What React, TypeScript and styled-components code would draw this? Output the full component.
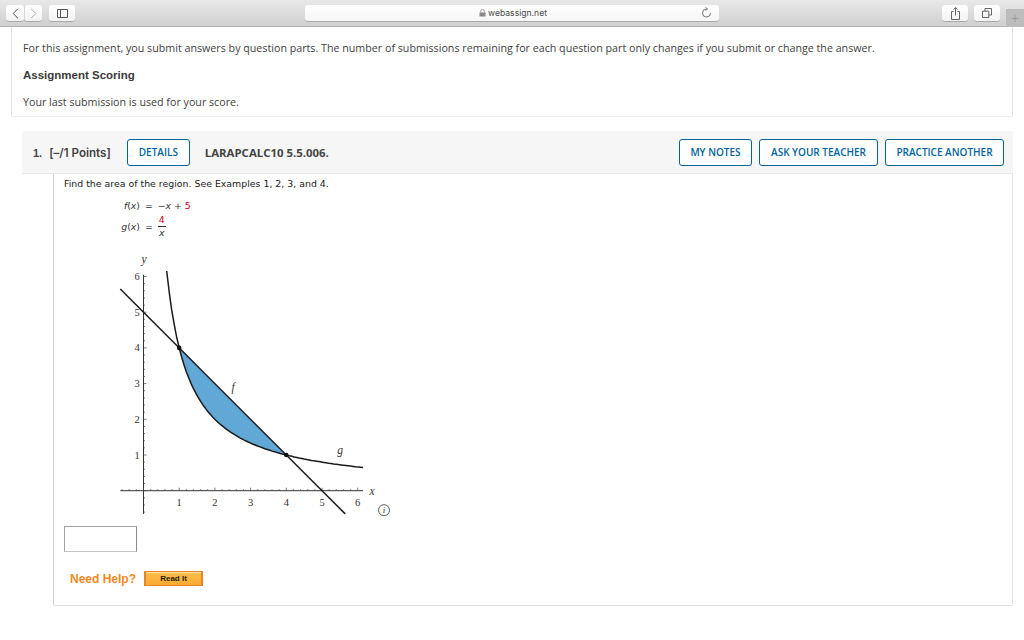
import React from "react";
import styled, { createGlobalStyle } from "styled-components";

const GlobalStyle = createGlobalStyle`
  html, body {
    margin: 0;
    padding: 0;
    background: #fff;
    overflow: hidden;
  }
`;

const Page = styled.div`
  width: 1024px;
  height: 640px;
  display: flex;
  flex-direction: column;
  overflow: hidden;
  font-family: "Open Sans", sans-serif;
  color: #3a3a3a;
`;

const Toolbar = styled.header`
  position: relative;
  z-index: 1;
  flex: 0 0 27px;
  box-sizing: border-box;
  height: 27px;
  padding: 5px 0 0 6px;
  display: flex;
  align-items: flex-start;
  background: linear-gradient(#e8e8e8, #d0d0d0);
  border-bottom: 1px solid #b4b4b4;
`;

const ToolButton = styled.div<{ $w: number }>`
  box-sizing: border-box;
  width: ${(p) => p.$w}px;
  height: 16px;
  display: flex;
  align-items: center;
  justify-content: center;
  background: linear-gradient(#fff, #f3f3f3);
  border-radius: 3px;
  box-shadow: 0 1px 0 #a9a9a9;
  color: #555;
`;

const BackForward = styled.div`
  display: flex;
  margin-right: 7px;

  & > div + div {
    border-left: 1px solid #d8d8d8;
  }
`;

const AddressBar = styled.div`
  box-sizing: border-box;
  width: 414px;
  height: 16px;
  margin-left: 230px;
  padding: 0 7px 0 0;
  display: flex;
  align-items: center;
  background: linear-gradient(#fff, #f6f6f6);
  border-radius: 3px;
  box-shadow: 0 1px 0 #a9a9a9;
`;

const Url = styled.div`
  flex: 1;
  display: flex;
  align-items: center;
  justify-content: center;
  gap: 2px;
  padding-left: 20px;
  font-family: "Inter", sans-serif;
  font-size: 8.6px;
  color: #4a4a4a;
`;

const RightTools = styled.div`
  margin-left: auto;
  display: flex;
  gap: 6px;
  margin-right: 24px;
`;

const NewTab = styled.div`
  position: absolute;
  right: 0;
  top: 9px;
  width: 18px;
  height: 18px;
  display: flex;
  align-items: center;
  justify-content: center;
  background: #bcbcbc;
  color: #8c8c8c;
  font-size: 15px;
  font-weight: 300;
`;

const Viewport = styled.main`
  flex: 1;
  min-height: 0;
  overflow: hidden;
`;

const Instructions = styled.section`
  box-sizing: border-box;
  height: 103px;
  margin: -13px 11px 0 11px;
  padding: 0 0 0 11px;
  border-left: 1px solid #e3e3e3;
  border-right: 1px solid #e3e3e3;
  border-bottom: 1px solid #eeeeee;
`;

const SectionHeading = styled.h3<{ $mt: number }>`
  margin: ${(p) => p.$mt}px 0 0;
  font-family: "Liberation Sans", sans-serif;
  font-size: 11.5px;
  line-height: 14px;
  font-weight: 700;
  color: #3a3a3a;
`;

const Body = styled.p<{ $mt: number }>`
  margin: ${(p) => p.$mt}px 0 0;
  font-size: 10.7px;
  line-height: 14px;
  color: #3f3f3f;
  white-space: nowrap;
`;

const Question = styled.article`
  margin: 14px 11px 0 22px;
`;

const QuestionHeader = styled.div`
  box-sizing: border-box;
  height: 43px;
  padding: 0 9px 0 11px;
  display: flex;
  align-items: center;
  background: #f6f6f6;
  border-bottom: 1px solid #e6e6e6;
  border-radius: 2px 2px 0 0;
`;

const Number = styled.span`
  padding-top: 1px;
  font-family: "Liberation Sans", sans-serif;
  font-size: 11px;
  font-weight: 700;
  color: #444;
  margin-right: 7px;
`;

const Points = styled.span`
  padding-top: 1px;
  font-family: "Inter", sans-serif;
  font-size: 11.6px;
  font-weight: 600;
  color: #444;
  margin-right: 16px;
`;

const OutlineButton = styled.button<{ $w: number }>`
  box-sizing: border-box;
  width: ${(p) => p.$w}px;
  height: 27px;
  padding: 0;
  background: #fff;
  border: 1.5px solid #00649b;
  border-radius: 3px;
  font-family: "Open Sans", sans-serif;
  font-size: 10px;
  font-weight: 600;
  color: #00649b;
`;

const Reference = styled.span`
  margin-left: 15px;
  font-family: "Open Sans", sans-serif;
  font-size: 11.4px;
  font-weight: 700;
  color: #444;
`;

const HeaderActions = styled.div`
  margin-left: auto;
  display: flex;
  gap: 7px;
`;

const QuestionBody = styled.div`
  box-sizing: border-box;
  height: 432px;
  margin-left: 31px;
  padding: 4px 0 0 10px;
  border-left: 1px solid #d2d2d2;
  border-right: 1px solid #e3e3e3;
  border-bottom: 1px solid #e3e3e3;
  border-radius: 0 0 2px 2px;
`;

const Prompt = styled.p`
  margin: 0;
  font-family: "DejaVu Sans", sans-serif;
  font-size: 9.4px;
  line-height: 12px;
  color: #222;
`;

const Equations = styled.div`
  margin: 9px 0 0 53px;
  display: flex;
  flex-direction: column;
  gap: 3px;
  font-family: "DejaVu Sans", sans-serif;
  font-size: 9.3px;
  color: #333;
`;

const EquationRow = styled.div`
  display: flex;
  align-items: center;
  gap: 5px;
  height: 12px;

  &:last-child {
    height: 24px;
  }
`;

const Lhs = styled.span`
  width: 23px;
  text-align: right;
  white-space: nowrap;
`;

const Red = styled.span`
  color: #d0021b;
`;

const Fraction = styled.span`
  display: inline-flex;
  flex-direction: column;
  align-items: center;
  line-height: 11px;
`;

const FractionTop = styled.span`
  color: #d0021b;
  padding: 0 1px 1px;
  border-bottom: 1px solid #333;
`;

const Graph = styled.svg`
  display: block;
  margin: 14px 0 0 36px;
`;

const AnswerBox = styled.div`
  box-sizing: border-box;
  width: 73px;
  height: 26px;
  margin-top: 4px;
  background: #fff;
  border: 1px solid #a3a3a3;
  border-right-color: #8c8c8c;
  border-bottom-color: #c4c4c4;
`;

const HelpRow = styled.div`
  margin: 19px 0 0 6px;
  display: flex;
  align-items: center;
  gap: 8px;
`;

const NeedHelp = styled.span`
  font-family: "Liberation Sans", sans-serif;
  font-size: 12px;
  font-weight: 700;
  color: #f08a24;
`;

const ReadIt = styled.span`
  box-sizing: border-box;
  width: 59px;
  height: 15px;
  display: flex;
  align-items: center;
  justify-content: center;
  background: linear-gradient(#fdc14e, #fba92e);
  border: 1px solid #e5842a;
  border-left-width: 2px;
  border-right-width: 2px;
  box-shadow: inset 0 1px 0 #fde0a4;
  font-family: "Liberation Sans", sans-serif;
  font-size: 8px;
  font-weight: 700;
  color: #241c08;
`;

// plot coordinates, same scale as the reference figure
const X0 = 43.5;
const Y0 = 238.7;
const UX = 35.7;
const UY = 35.7;
const px = (x: number) => X0 + x * UX;
const py = (y: number) => Y0 - y * UY;

function hyperbola(from: number, to: number) {
  const pts: string[] = [];
  for (let i = 0; i <= 80; i++) {
    const x = from + ((to - from) * i) / 80;
    pts.push(`${px(x).toFixed(1)} ${py(4 / x).toFixed(1)}`);
  }
  return pts;
}

function Plot() {
  const xTicks: number[] = [];
  for (let i = -3; i <= 30; i++) xTicks.push(i);
  const yTicks: number[] = [];
  for (let i = -3; i <= 30; i++) yTicks.push(i);
  return (
    <Graph width={300} height={270} viewBox="0 0 300 270">
      <path d={`M${hyperbola(1, 4).join(" L")} Z`} fill="#62a8d6" />
      <line x1={px(-0.65)} y1={Y0} x2={px(6.15)} y2={Y0} stroke="#333" strokeWidth={1} />
      <line x1={X0} y1={py(6.05)} x2={X0} y2={py(-0.65)} stroke="#333" strokeWidth={1} />
      {xTicks.map((i) => (
        <line key={i} x1={px(i / 5)} x2={px(i / 5)} y1={Y0 - (i % 5 === 0 ? 3 : 1.5)} y2={Y0} stroke="#444" strokeWidth={0.7} />
      ))}
      {yTicks.map((i) => (
        <line key={i} x1={X0} x2={X0 + (i % 5 === 0 ? 3 : 1.5)} y1={py(i / 5)} y2={py(i / 5)} stroke="#444" strokeWidth={0.7} />
      ))}
      <path d={`M${hyperbola(0.65, 6.15).join(" L")}`} fill="none" stroke="#1a1a1a" strokeWidth={1.5} />
      <line x1={px(-0.65)} y1={py(5.65)} x2={px(5.65)} y2={py(-0.65)} stroke="#1a1a1a" strokeWidth={1.5} />
      <circle cx={px(1)} cy={py(4)} r={2.3} fill="#111" />
      <circle cx={px(4)} cy={py(1)} r={2.3} fill="#111" />
      <g fontFamily="'Liberation Serif', serif" fontSize={10.5} fill="#333" textAnchor="middle">
        {[1, 2, 3, 4, 5, 6].map((n) => (
          <text key={`x${n}`} x={px(n)} y={Y0 + 15}>{n}</text>
        ))}
        {[1, 2, 3, 4, 5, 6].map((n) => (
          <text key={`y${n}`} x={X0 - 6.5} y={py(n) + 3.5}>{n}</text>
        ))}
        <g fontStyle="italic" fontSize={11.5}>
          <text x={X0 + 0.5} y={Y0 - 228}>y</text>
          <text x={272} y={Y0 + 4}>x</text>
          <text x={133} y={Y0 - 100}>f</text>
          <text x={240} y={Y0 - 37}>g</text>
        </g>
        <circle cx={284} cy={Y0 + 19.5} r={5.5} fill="none" stroke="#333" strokeWidth={0.8} />
        <text x={284} y={Y0 + 22.5} fontStyle="italic" fontSize={9}>i</text>
      </g>
    </Graph>
  );
}

export default function App() {
  return (
    <Page>
      <GlobalStyle />
      <Toolbar>
        <BackForward>
          <ToolButton $w={18}>
            <svg width="7" height="11" viewBox="0 0 7 11"><path d="M6 0.7 1.2 5.5 6 10.3" fill="none" stroke="#555" strokeWidth="1" /></svg>
          </ToolButton>
          <ToolButton $w={18}>
            <svg width="7" height="11" viewBox="0 0 7 11"><path d="M1 0.7 5.8 5.5 1 10.3" fill="none" stroke="#aaa" strokeWidth="1" /></svg>
          </ToolButton>
        </BackForward>
        <ToolButton $w={26}>
          <svg width="11" height="9" viewBox="0 0 11 9"><path d="M.5.5h10v8H.5zM3.5.5v8" fill="none" stroke="#555" strokeWidth="1" /></svg>
        </ToolButton>
        <AddressBar>
          <Url>
            <svg width="7" height="8" viewBox="0 0 7 8"><path d="M1.7 3.5V2.3a1.8 1.8 0 0 1 3.6 0v1.2" fill="none" stroke="#888" strokeWidth=".8" /><rect x=".5" y="3.5" width="6" height="4" fill="#888" /></svg>
            webassign.net
          </Url>
          <svg width="11" height="12" viewBox="0 0 11 12"><path d="M5.5 2a4 4 0 1 0 4 4M4.5.6 6.6 2 4.5 3.6" fill="none" stroke="#666" strokeWidth=".9" /></svg>
        </AddressBar>
        <RightTools>
          <ToolButton $w={26}>
            <svg width="9" height="13" viewBox="0 0 9 13"><path d="M2.5 4.5H.5v8h8v-8h-2M4.5 8.5V.8M2.5 2.6l2-2 2 2" fill="none" stroke="#555" strokeWidth=".9" /></svg>
          </ToolButton>
          <ToolButton $w={26}>
            <svg width="10" height="10" viewBox="0 0 10 10"><path d="M.5 3.2h6.3v6.3H.5zM3 3V.5h6.5V7H7" fill="none" stroke="#555" strokeWidth=".9" /></svg>
          </ToolButton>
        </RightTools>
        <NewTab>+</NewTab>
      </Toolbar>
      <Viewport>
        <Instructions>
          <SectionHeading $mt={0}>Assignment Submission</SectionHeading>
          <Body $mt={13}>For this assignment, you submit answers by question parts. The number of submissions remaining for each question part only changes if you submit or change the answer.</Body>
          <SectionHeading $mt={13}>Assignment Scoring</SectionHeading>
          <Body $mt={13}>Your last submission is used for your score.</Body>
        </Instructions>
        <Question>
          <QuestionHeader>
            <Number>1.</Number>
            <Points>[–/1 Points]</Points>
            <OutlineButton $w={63}>DETAILS</OutlineButton>
            <Reference>LARAPCALC10 5.5.006.</Reference>
            <HeaderActions>
              <OutlineButton $w={73}>MY NOTES</OutlineButton>
              <OutlineButton $w={119}>ASK YOUR TEACHER</OutlineButton>
              <OutlineButton $w={119}>PRACTICE ANOTHER</OutlineButton>
            </HeaderActions>
          </QuestionHeader>
          <QuestionBody>
            <Prompt>Find the area of the region. See Examples 1, 2, 3, and 4.</Prompt>
            <Equations>
              <EquationRow>
                <Lhs><i>f</i>(<i>x</i>)</Lhs>
                <span>=</span>
                <span>−<i>x</i> + <Red>5</Red></span>
              </EquationRow>
              <EquationRow>
                <Lhs><i>g</i>(<i>x</i>)</Lhs>
                <span>=</span>
                <Fraction>
                  <FractionTop>4</FractionTop>
                  <i>x</i>
                </Fraction>
              </EquationRow>
            </Equations>
            <Plot />
            <AnswerBox />
            <HelpRow>
              <NeedHelp>Need Help?</NeedHelp>
              <ReadIt>Read It</ReadIt>
            </HelpRow>
          </QuestionBody>
        </Question>
      </Viewport>
    </Page>
  );
}
